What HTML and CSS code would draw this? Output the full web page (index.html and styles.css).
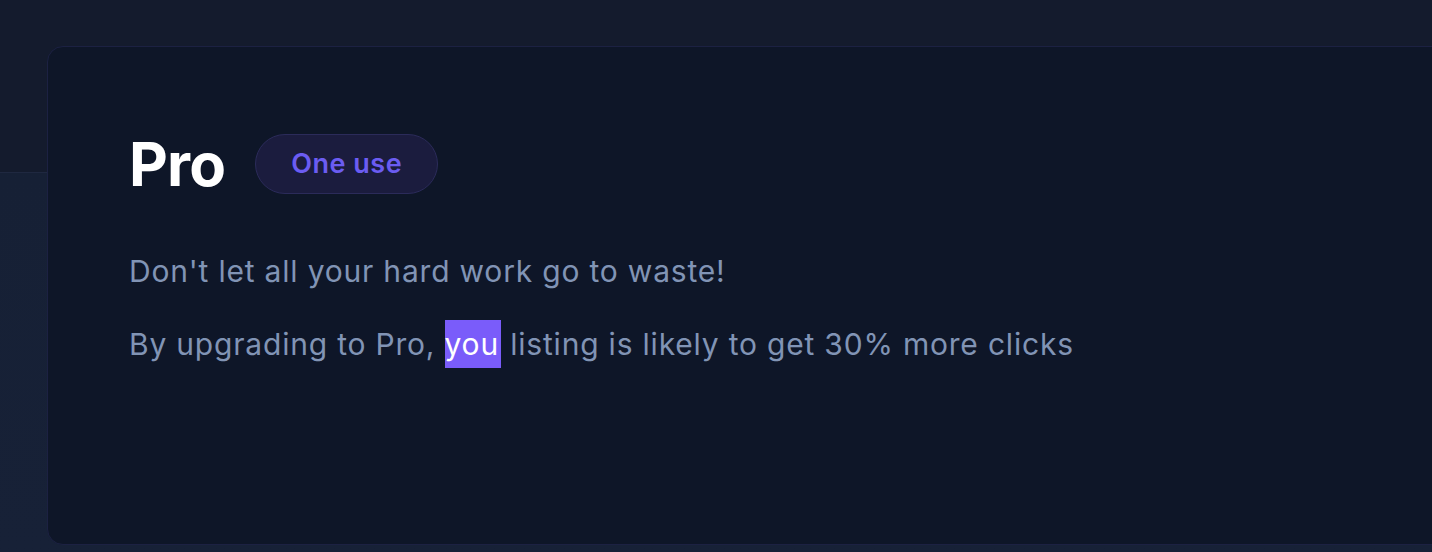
FILE: index.html
```html
<!DOCTYPE html>
<html lang="en">
<head>
  <meta charset="UTF-8">
  <meta name="viewport" content="width=device-width, initial-scale=1">
  <title>Upgrade to Pro</title>
  <link rel="stylesheet" href="styles.css">
</head>
<body>
  <div class="page">
    <div class="plan-card">
      <div class="plan-head">
        <h1 class="plan-title">Pro</h1>
        <span class="plan-badge">One use</span>
      </div>

      <p class="plan-text">Don't let all your hard work go to waste!</p>
      <p class="plan-text">By upgrading to Pro, <span class="hl">you</span> listing is likely to get 30% more clicks</p>
    </div>
  </div>
</body>
</html>
```

FILE: styles.css
```css
html, body {
  margin: 0;
  padding: 0;
}
body {
  font-family: 'Inter', 'Noto Sans', sans-serif;
  height: 552px;
  overflow: hidden;
  background: linear-gradient(to bottom, #141b2d 0, #141b2d 172px, #1f2840 172px, #1f2840 173px, #162035 173px, #172137 100%);
}
.page {
  padding: 46px 0 0 47px;
}
.plan-card {
  height: 499px;
  box-sizing: border-box;
  margin-right: -60px;
  background: #0e1628;
  border: 1px solid #1c2142;
  border-radius: 16px;
  padding: 87px 81px 0;
}
.plan-head {
  display: flex;
  align-items: center;
  gap: 30px;
  margin-bottom: 53px;
}
.plan-title {
  margin: 0;
  font-size: 60px;
  font-weight: 700;
  line-height: 60px;
  color: #fff;
  letter-spacing: -0.8px;
}
.plan-badge {
  display: inline-block;
  padding: 11px 35px;
  font-size: 27px;
  line-height: 36px;
  font-weight: 600;
  color: #6b5cf2;
  background: #1b1c3e;
  border: 1px solid #2b2b5a;
  border-radius: 999px;
  letter-spacing: 0.5px;
}
.plan-text {
  margin: 0 0 25px;
  font-size: 30px;
  line-height: 48px;
  letter-spacing: 0.8px;
  color: #8194b5;
}
.hl {
  display: inline-block;
  padding-right: 2px;
  background: #7a5cfa;
  color: #fff;
}
```
